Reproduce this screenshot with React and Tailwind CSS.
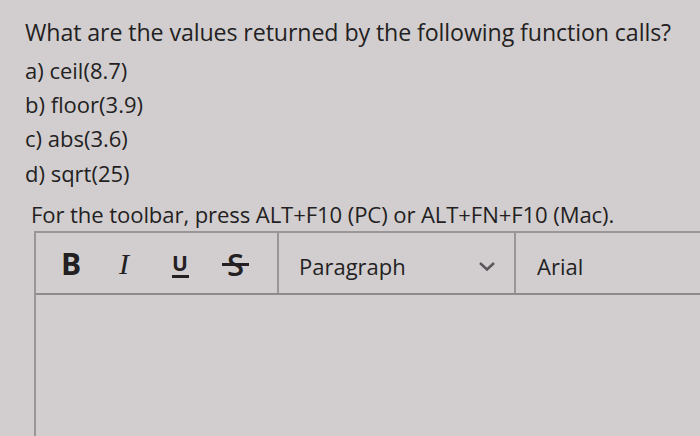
export default function App() {
  const font = { fontFamily: '"Open Sans", "Noto Sans", sans-serif' };
  return (
    <div className="w-[700px] h-[436px] overflow-hidden bg-[#d2cecf] text-[#231f22]" style={font}>
      <div className="pl-[25px] pt-[14px]">
        <div className="text-[23.2px] leading-[36px] tracking-[-0.1px]">What are the values returned by the following function calls?</div>
        <div className="text-[22px] leading-[34px] mt-[3px]">a) ceil(8.7)</div>
        <div className="text-[22px] leading-[34px]">b) floor(3.9)</div>
        <div className="text-[22px] leading-[34px]">c) abs(3.6)</div>
        <div className="text-[22px] leading-[34px] mt-[1px]">d) sqrt(25)</div>
        <div className="pl-[6px] text-[22.1px] leading-[40px] mt-[4px] tracking-[-0.1px]">For the toolbar, press ALT+F10 (PC) or ALT+FN+F10 (Mac).</div>
      </div>
      <div className="ml-[34px] mt-[-3px] border-l-2 border-t-2 border-[#9a9697] h-[220px]">
        <div className="flex h-[62px] border-b-2 border-[#8e8a8b] items-center">
          <div className="flex items-center w-[243px] h-full border-r-2 border-[#9a9697] pl-[25px] pt-[2px]">
            <span className="font-bold w-[58px] text-[30px] leading-none">B</span>
            <span className="italic w-[53px] text-[30px] leading-none" style={{ fontFamily: '"Liberation Serif", serif' }}>I</span>
            <span className="w-[55px] flex flex-col items-start pt-[5px]">
              <span className="text-[21px] font-bold leading-[17px]">U</span>
              <span className="block w-[17px] h-[3px] bg-[#231f22] mt-[3px]"></span>
            </span>
            <span className="relative font-semibold text-[31px] leading-none">
              S
              <span className="absolute left-[-5px] top-[14px] w-[27px] h-[3px] bg-[#231f22]"></span>
            </span>
          </div>
          <div className="flex items-center w-[237px] h-full border-r-2 border-[#9a9697] pl-[20px] pr-[18px] pt-[6px] justify-between text-[22px]">
            <span>Paragraph</span>
            <svg width="18" height="11" viewBox="0 0 18 11"><path d="M2 2 L9 8.5 L16 2" fill="none" stroke="#5a565b" strokeWidth="2.5" /></svg>
          </div>
          <div className="pl-[21px] pt-[6px] text-[22px]">Arial</div>
        </div>
      </div>
    </div>
  );
}
